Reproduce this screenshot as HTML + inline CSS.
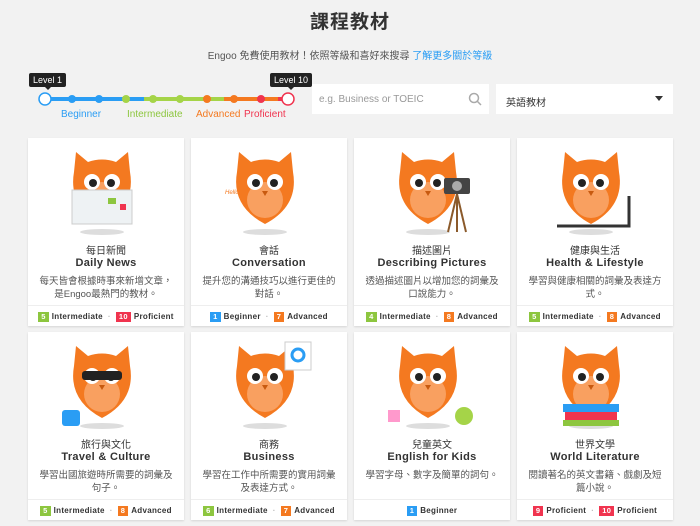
<!DOCTYPE html>
<html><head><meta charset="utf-8">
<style>
*{margin:0;padding:0;box-sizing:border-box}
body{width:700px;height:526px;background:#f2f2f2;font-family:"Liberation Sans","Noto Sans CJK TC",sans-serif;color:#333;position:relative;overflow:hidden}
h1{position:absolute;top:7px;left:0;width:700px;text-align:center;font-size:19px;font-weight:bold;color:#333;letter-spacing:1px}
.sub{position:absolute;top:47px;left:0;width:700px;text-align:center;font-size:10px;color:#555}
.sub a{color:#2a9df4;text-decoration:none}
.tag{position:absolute;background:#222;color:#fff;font-size:9px;padding:2px 4px;border-radius:2px}
.tag:after{content:"";position:absolute;left:50%;bottom:-3px;margin-left:-3px;border:3px solid transparent;border-bottom:0;border-top-color:#222}
.lv{position:absolute;top:109px;font-size:10px}
.search{position:absolute;left:312px;top:84px;width:177px;height:30px;background:#fff;font-size:10px;color:#999;padding:10px 7px}
.sel{position:absolute;left:496px;top:84px;width:177px;height:30px;background:#fff;font-size:10px;color:#333;padding:10px 10px}
.card{position:absolute;width:156px;height:188px;background:#fff;box-shadow:0 1px 2px rgba(0,0,0,.12);text-align:center}
.card svg{position:absolute;left:34px;top:6px}
.zh{position:absolute;top:104px;width:100%;font-size:10px;color:#333}
.en{position:absolute;top:119px;width:100%;font-size:11px;font-weight:bold;color:#333;letter-spacing:.3px}
.ds{position:absolute;top:137px;left:8px;right:8px;font-size:9.5px;line-height:13px;color:#555}
.ft{position:absolute;bottom:0;left:0;right:0;height:21px;border-top:1px solid #eee;font-size:8px;font-weight:bold;color:#333;padding-top:6px;letter-spacing:.3px}
.b{display:inline-block;color:#fff;padding:0 3px;margin-right:3px;line-height:10px;height:10px;font-size:7.5px}
.dot{color:#bbb;margin:0 5px}
.g{background:#8dc63f}.r{background:#f0344f}.bl{background:#2a9df4}.o{background:#f47920}
</style></head><body>
<h1>課程教材</h1>
<div class="sub">Engoo 免費使用教材！依照等級和喜好來搜尋 <a>了解更多關於等級</a></div>

<div class="tag" style="left:29px;top:73px">Level 1</div>
<div class="tag" style="left:270px;top:73px">Level 10</div>
<svg style="position:absolute;left:36px;top:91px" width="262" height="16">
<line x1="8" y1="8" x2="108" y2="8" stroke="#2a9df4" stroke-width="4"/>
<line x1="108" y1="8" x2="188" y2="8" stroke="#a5d448" stroke-width="4"/>
<line x1="188" y1="8" x2="242" y2="8" stroke="#f47920" stroke-width="4"/>
<line x1="242" y1="8" x2="252" y2="8" stroke="#f0344f" stroke-width="4"/>
<circle cx="36" cy="8" r="4" fill="#2a9df4"/><circle cx="63" cy="8" r="4" fill="#2a9df4"/>
<circle cx="90" cy="8" r="4" fill="#a5d448"/><circle cx="117" cy="8" r="4" fill="#a5d448"/><circle cx="144" cy="8" r="4" fill="#a5d448"/>
<circle cx="171" cy="8" r="4" fill="#f47920"/><circle cx="198" cy="8" r="4" fill="#f47920"/>
<circle cx="225" cy="8" r="4" fill="#f0344f"/>
<circle cx="9" cy="8" r="6" fill="#fff" stroke="#2a9df4" stroke-width="1.5"/>
<circle cx="252" cy="8" r="6" fill="#fff" stroke="#f0344f" stroke-width="1.5"/>
</svg>
<div class="lv" style="left:61px;color:#2a9df4">Beginner</div>
<div class="lv" style="left:127px;color:#8dc63f">Intermediate</div>
<div class="lv" style="left:196px;color:#f47920">Advanced</div>
<div class="lv" style="left:244px;color:#f0344f">Proficient</div>

<div class="search">e.g. Business or TOEIC
<svg style="position:absolute;right:7px;top:8px" width="14" height="14"><circle cx="6" cy="6" r="4.5" fill="none" stroke="#aaa" stroke-width="1.5"/><line x1="9.5" y1="9.5" x2="13" y2="13" stroke="#aaa" stroke-width="1.5"/></svg></div>
<div class="sel">英語教材<span style="position:absolute;right:10px;top:12px;border:4px solid transparent;border-top:5px solid #333;border-bottom:0"></span></div>

<svg width="0" height="0" style="position:absolute"><defs>
<g id="owl">
<ellipse cx="40" cy="88" rx="22" ry="3" fill="#ddd"/>
<path d="M12 28 L14 8 L26 18 Q40 13 54 18 L66 8 L68 28 Q74 62 40 80 Q6 62 12 28Z" fill="#f47920"/>
<ellipse cx="40" cy="56" rx="18" ry="18" fill="#f9a060"/>
<circle cx="30" cy="38" r="8" fill="#fff"/><circle cx="50" cy="38" r="8" fill="#fff"/>
<circle cx="31" cy="39" r="4" fill="#222"/><circle cx="49" cy="39" r="4" fill="#222"/>
<path d="M37 47 L43 47 L40 52Z" fill="#c85a10"/>
</g></defs></svg>

<div class="card" style="left:28px;top:138px"><svg width="88" height="94"><use href="#owl"/><rect x="10" y="46" width="60" height="34" fill="#eef2f4" stroke="#ccc"/><rect x="46" y="54" width="8" height="6" fill="#8dc63f"/><rect x="58" y="60" width="6" height="6" fill="#f0344f"/></svg>
<div class="zh">每日新聞</div><div class="en">Daily News</div><div class="ds">每天皆會根據時事來新增文章，是Engoo最熱門的教材。</div>
<div class="ft"><span class="b g">5</span>Intermediate<span class="dot">·</span><span class="b r">10</span>Proficient</div></div>

<div class="card" style="left:191px;top:138px"><svg width="88" height="94"><use href="#owl"/><text x="0" y="50" font-size="6" fill="#f47920" font-style="italic">Hello</text></svg>
<div class="zh">會話</div><div class="en">Conversation</div><div class="ds">提升您的溝通技巧以進行更佳的對話。</div>
<div class="ft"><span class="b bl">1</span>Beginner<span class="dot">·</span><span class="b o">7</span>Advanced</div></div>

<div class="card" style="left:354px;top:138px"><svg width="88" height="94"><use href="#owl"/><rect x="56" y="34" width="26" height="16" rx="2" fill="#444"/><circle cx="69" cy="42" r="5" fill="#aaa"/><path d="M69 50 L60 88 M69 50 L78 88 M69 50 L69 88" stroke="#8b5a2b" stroke-width="2"/></svg>
<div class="zh">描述圖片</div><div class="en">Describing Pictures</div><div class="ds">透過描述圖片以增加您的詞彙及口說能力。</div>
<div class="ft"><span class="b g">4</span>Intermediate<span class="dot">·</span><span class="b o">8</span>Advanced</div></div>

<div class="card" style="left:517px;top:138px"><svg width="88" height="94"><use href="#owl"/><path d="M6 82 L78 82 L78 52" stroke="#333" stroke-width="3" fill="none"/></svg>
<div class="zh">健康與生活</div><div class="en">Health &amp; Lifestyle</div><div class="ds">學習與健康相關的詞彙及表達方式。</div>
<div class="ft"><span class="b g">5</span>Intermediate<span class="dot">·</span><span class="b o">8</span>Advanced</div></div>

<div class="card" style="left:28px;top:332px"><svg width="88" height="94"><use href="#owl"/><rect x="20" y="33" width="40" height="9" rx="3" fill="#222"/><rect x="0" y="72" width="18" height="16" rx="3" fill="#2a9df4"/></svg>
<div class="zh">旅行與文化</div><div class="en">Travel &amp; Culture</div><div class="ds">學習出國旅遊時所需要的詞彙及句子。</div>
<div class="ft"><span class="b g">5</span>Intermediate<span class="dot">·</span><span class="b o">8</span>Advanced</div></div>

<div class="card" style="left:191px;top:332px"><svg width="88" height="94"><use href="#owl"/><rect x="60" y="4" width="26" height="28" fill="#fff" stroke="#ccc"/><circle cx="73" cy="17" r="6" fill="none" stroke="#2a9df4" stroke-width="3"/></svg>
<div class="zh">商務</div><div class="en">Business</div><div class="ds">學習在工作中所需要的實用詞彙及表達方式。</div>
<div class="ft"><span class="b g">6</span>Intermediate<span class="dot">·</span><span class="b o">7</span>Advanced</div></div>

<div class="card" style="left:354px;top:332px"><svg width="88" height="94"><use href="#owl"/><rect x="0" y="72" width="12" height="12" fill="#f9c"/><circle cx="76" cy="78" r="9" fill="#a5d448"/></svg>
<div class="zh">兒童英文</div><div class="en">English for Kids</div><div class="ds">學習字母、數字及簡單的詞句。</div>
<div class="ft"><span class="b bl">1</span>Beginner</div></div>

<div class="card" style="left:517px;top:332px"><svg width="88" height="94"><use href="#owl"/><rect x="12" y="66" width="56" height="8" fill="#2a9df4"/><rect x="14" y="74" width="52" height="8" fill="#f0344f"/><rect x="12" y="82" width="56" height="6" fill="#8dc63f"/></svg>
<div class="zh">世界文學</div><div class="en">World Literature</div><div class="ds">閱讀著名的英文書籍、戲劇及短篇小說。</div>
<div class="ft"><span class="b r">9</span>Proficient<span class="dot">·</span><span class="b r">10</span>Proficient</div></div>
</body></html>
